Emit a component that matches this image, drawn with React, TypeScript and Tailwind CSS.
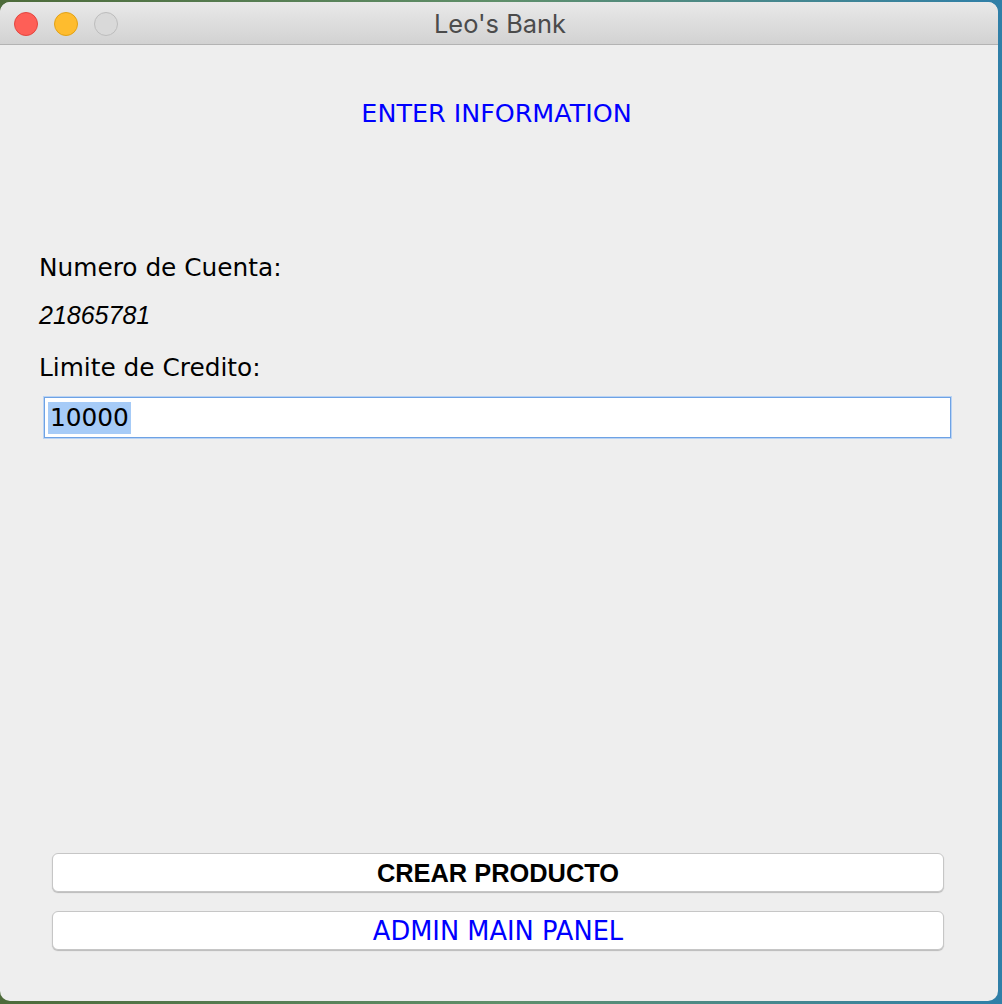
export default function App() {
  const lucida = { fontFamily: '"DejaVu Sans", sans-serif' }

  return (
    <div className="w-[1002px] h-[1004px] bg-gradient-to-r from-[#4d6b3a] via-[#5f8f6a] to-[#2f7fa8] overflow-hidden">
      <div className="mt-[2px] w-[998px] h-[999px] rounded-[10px] overflow-hidden bg-[#eeeeee] flex flex-col">
        {/* Title bar */}
        <div className="relative h-[43px] shrink-0 bg-gradient-to-b from-[#e9e9e9] to-[#d2d2d2] border-b border-[#b3b3b3] flex items-center justify-center">
          <div className="absolute left-[14px] top-[10px] flex gap-[16px]">
            <span className="w-[24px] h-[24px] rounded-full bg-[#fe5f57] border border-[#e2463f]" />
            <span className="w-[24px] h-[24px] rounded-full bg-[#febc2e] border border-[#e1a116]" />
            <span className="w-[24px] h-[24px] rounded-full bg-[#d9d9d9] border border-[#bcbcbc]" />
          </div>
          <span className="pt-[3px] pl-[2px] text-[25.4px] text-[#4b4b4b]" style={{ fontFamily: 'Inter, "Noto Sans", sans-serif' }}>
            Leo's Bank
          </span>
        </div>

        {/* Content */}
        <div className="flex-1 flex flex-col px-[39px] pb-[51px]" style={lucida}>
          <div className="mt-[53px] text-center text-[25.4px] leading-[30px] text-[#0000ff] pr-[5px]">
            ENTER INFORMATION
          </div>

          <div className="mt-[125px] text-[24.8px] leading-[30px] text-black">Numero de Cuenta:</div>
          <div
            className="mt-[17px] text-[25px] leading-[30px] italic text-black"
            style={{ fontFamily: '"Liberation Sans", Arial, sans-serif' }}
          >
            21865781
          </div>
          <div className="mt-[23px] text-[24.8px] leading-[30px] text-black">Limite de Credito:</div>

          <div className="mt-[14px] ml-[5px] mr-[8px] h-[41px] bg-white border border-[#6ea2e4] shadow-[0_0_0_1px_#b9d3f4] flex items-center px-[3px]">
            <span className="bg-[#a6cbf7] text-[24.8px] leading-[32px] text-black px-[2px]">10000</span>
          </div>

          <div className="mt-auto flex flex-col gap-[19px] ml-[13px] mr-[15px]">
            <button className="h-[39px] bg-white rounded-[6px] border border-[#c6c6c6] shadow-[0_1px_1px_rgba(0,0,0,0.22)] text-[25.4px] font-bold text-black"
              style={{ fontFamily: '"Liberation Sans", Arial, sans-serif' }}>
              CREAR PRODUCTO
            </button>
            <button className="h-[39px] bg-white rounded-[6px] border border-[#c6c6c6] shadow-[0_1px_1px_rgba(0,0,0,0.22)] text-[25.7px] text-[#0000ff]">
              ADMIN MAIN PANEL
            </button>
          </div>
        </div>
      </div>
    </div>
  )
}
